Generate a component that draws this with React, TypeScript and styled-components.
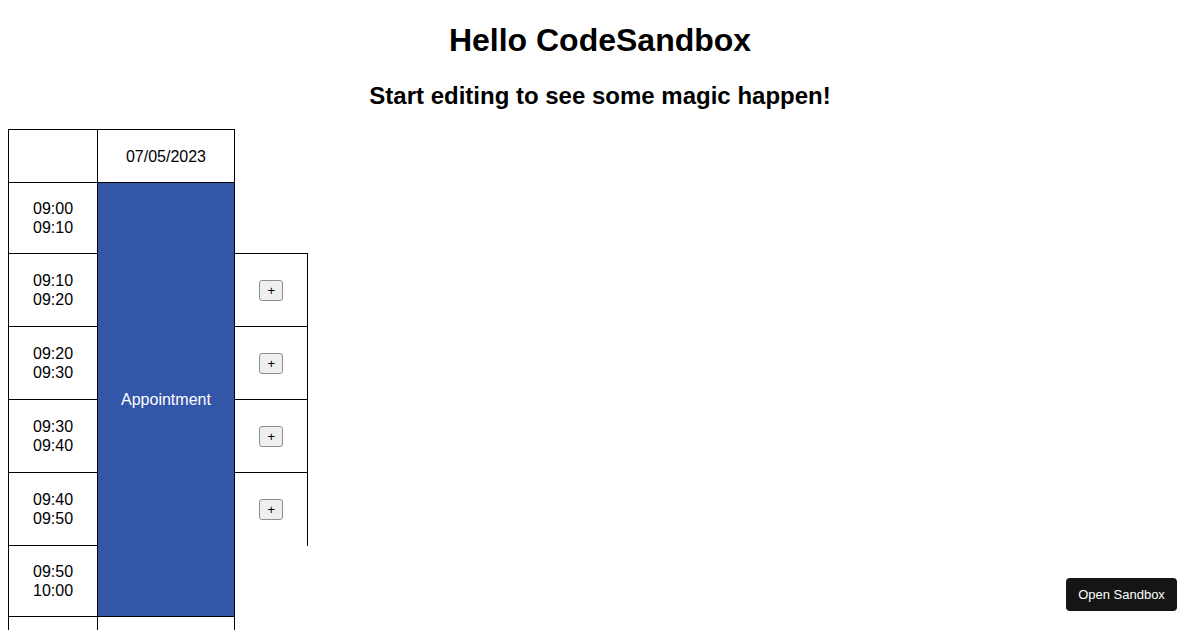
import { Component, ReactNode } from "react";
import styled, { createGlobalStyle } from "styled-components";

const GlobalStyle = createGlobalStyle`
  body {
    margin: 8px;
    background: #ffffff;
    color: #000000;
    font-family: "Liberation Sans", Arial, sans-serif;
  }
`;

const Page = styled.div`
  text-align: center;
`;

const Title = styled.h1`
  font-size: 32px;
  font-weight: bold;
  margin: 14px 0 23px;
`;

const Subtitle = styled.h2`
  font-size: 24px;
  font-weight: bold;
  margin: 20px 0 19px;
`;

const Schedule = styled.table`
  border-collapse: collapse;
  font-size: 16px;
`;

const Cell = styled.td<{ $height?: number }>`
  border: 1px solid #000;
  padding: 16px 24px;
  text-align: center;
  vertical-align: middle;
  line-height: 19px;
  height: ${({ $height }) => ($height ? `${$height}px` : "auto")};
  box-sizing: border-box;
`;

const AppointmentCell = styled(Cell)`
  background-color: #3456a9;
  color: #ffffff;
  padding: 16px 23px;
`;

const SlotCell = styled(Cell)`
  border-bottom: none;
  padding: 16px 24px;
`;

const AddButton = styled.button`
  font-family: "Liberation Sans", Arial, sans-serif;
  font-size: 13px;
  line-height: 17px;
  padding: 1px 7.5px;
  background: #efefef;
  color: #000;
  border: 1px solid #8f8f8f;
  border-radius: 3px;
`;

const SandboxButton = styled.button`
  position: fixed;
  right: 23px;
  bottom: 19px;
  width: 111px;
  height: 33px;
  background: #151515;
  color: #ffffff;
  border: none;
  border-radius: 4px;
  font-family: "Liberation Sans", Arial, sans-serif;
  font-size: 13px;
`;

interface Slot {
  start: string;
  end: string;
  free: boolean;
}

const slots: Slot[] = [
  { start: "09:00", end: "09:10", free: false },
  { start: "09:10", end: "09:20", free: true },
  { start: "09:20", end: "09:30", free: true },
  { start: "09:30", end: "09:40", free: true },
  { start: "09:40", end: "09:50", free: true },
  { start: "09:50", end: "10:00", free: false },
];

export default class App extends Component {
  render(): ReactNode {
    return (
      <Page>
        <GlobalStyle />
        <Title>Hello CodeSandbox</Title>
        <Subtitle>Start editing to see some magic happen!</Subtitle>
        <Schedule>
          <tbody>
            <tr>
              <Cell $height={53} />
              <Cell>07/05/2023</Cell>
            </tr>
            {slots.map((slot, index) => (
              <tr key={slot.start}>
                <Cell $height={slot.free ? 73 : index === 0 ? 70 : 71}>
                  {slot.start}
                  <br />
                  {slot.end}
                </Cell>
                {index === 0 && (
                  <AppointmentCell rowSpan={slots.length}>
                    Appointment
                  </AppointmentCell>
                )}
                {slot.free && (
                  <SlotCell>
                    <AddButton>+</AddButton>
                  </SlotCell>
                )}
              </tr>
            ))}
            <tr>
              <Cell $height={71}>
                10:00
                <br />
                10:10
              </Cell>
              <Cell />
            </tr>
          </tbody>
        </Schedule>
        <SandboxButton>Open Sandbox</SandboxButton>
      </Page>
    );
  }
}
